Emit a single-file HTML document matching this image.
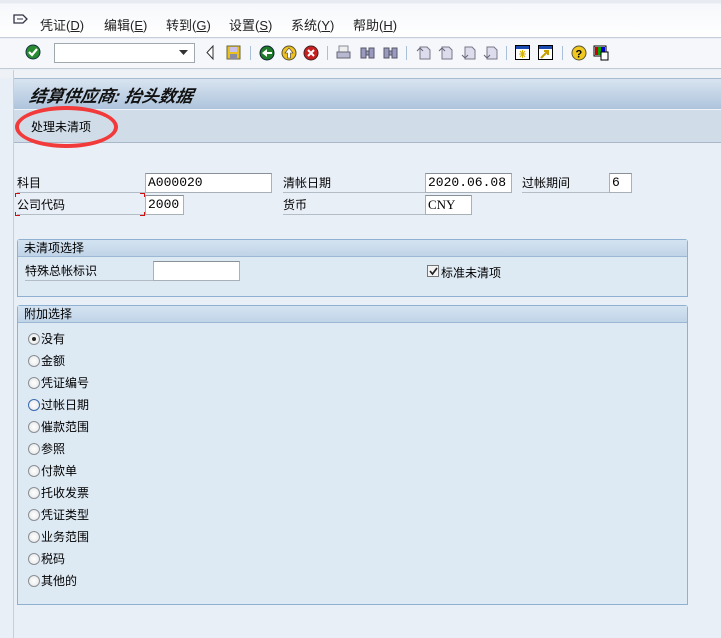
<!DOCTYPE html>
<html><head><meta charset="utf-8"><style>
*{margin:0;padding:0;box-sizing:border-box}
body{width:721px;height:638px;overflow:hidden;background:#e9eff7;font-family:"Liberation Sans","Noto Sans CJK SC",sans-serif;font-size:12px;color:#000;position:relative}
.a{position:absolute;white-space:nowrap}
.inp{position:absolute;background:#fff;border:1px solid #a8b0b8;border-top-color:#8a9098;font-family:"Liberation Mono","Noto Sans CJK SC",monospace;font-size:13px;line-height:17px;padding-left:2px}
.lbl{position:absolute;border-bottom:1px solid #b4bcc6;font-size:12px;line-height:18px}
.grp{position:absolute;left:17px;width:671px;border:1px solid #8fb0d0;border-radius:3px 3px 0 0;background:#dde9f3}
.gh{height:17px;background:linear-gradient(#d4e3f1,#c0d4e8);border-bottom:1px solid #9cb8d4;padding-left:6px;line-height:16px;font-size:12px}
.rd{position:absolute;left:10px;font-size:12px;line-height:14px}
.rd i{display:inline-block;width:12px;height:12px;border:1px solid #8a8f96;border-radius:50%;background:radial-gradient(#fff,#e4e4e4);vertical-align:-2px;margin-right:1px;position:relative}
.rd i.on::after{content:"";position:absolute;left:3px;top:3px;width:4px;height:4px;border-radius:50%;background:#222}
.sep{position:absolute;top:46px;width:1px;height:14px;background:#a8c0d8}
.ic{position:absolute;top:45px;width:15px;height:15px}
.rc{position:absolute;background:#d01010}
</style></head><body>
<div class="a" style="left:0;top:0;width:721px;height:38px;background:linear-gradient(#e8ecf2 0,#e8ecf2 3px,#f6f8fb 4px,#fff 38px);border-bottom:1px solid #c8ced6"></div>
<svg class="a" style="left:13px;top:14px" width="16" height="14"><path d="M1 1h9l4 4-4 4H1z" fill="none" stroke="#334" stroke-width="1.3"/><path d="M4 5h6" stroke="#334"/></svg>
<div class="a" style="left:40px;top:15px;font-size:13px;color:#222">凭证(<u>D</u>)</div>
<div class="a" style="left:104px;top:15px;font-size:13px;color:#222">编辑(<u>E</u>)</div>
<div class="a" style="left:166px;top:15px;font-size:13px;color:#222">转到(<u>G</u>)</div>
<div class="a" style="left:229px;top:15px;font-size:13px;color:#222">设置(<u>S</u>)</div>
<div class="a" style="left:291px;top:15px;font-size:13px;color:#222">系统(<u>Y</u>)</div>
<div class="a" style="left:353px;top:15px;font-size:13px;color:#222">帮助(<u>H</u>)</div>
<div class="a" style="left:0;top:39px;width:721px;height:30px;background:#f5f7fa;border-bottom:1px solid #c4cad2"></div>
<svg class="a" style="left:25px;top:44px" width="16" height="16"><circle cx="8" cy="8" r="7" fill="#2a8a30" stroke="#134" stroke-width="1"/><path d="M4 8l3 3 5-6" stroke="#fff" stroke-width="2.2" fill="none"/></svg>
<div class="a" style="left:54px;top:43px;width:141px;height:20px;background:#fff;border:1px solid #a0a8b0"></div>
<svg class="a" style="left:179px;top:50px" width="10" height="6"><path d="M0 0h9L4.5 5z" fill="#333"/></svg>
<svg class="a" style="left:205px;top:45px" width="10" height="15"><path d="M8 1L2 7.5 8 14z" fill="#fff" stroke="#333"/></svg>
<svg class="a" style="left:226px;top:45px" width="15" height="15"><rect x="1" y="1" width="13" height="13" fill="#e8c020" stroke="#664"/><rect x="4" y="2" width="7" height="5" fill="#c8c0e8"/><rect x="4" y="9" width="7" height="5" fill="#8a8aa0"/></svg>
<div class="sep" style="left:250px"></div>
<svg class="a" style="left:259px;top:45px" width="16" height="16"><circle cx="8" cy="8" r="7" fill="#1f7a2a" stroke="#123"/><path d="M3 8l5-4v3h5v2H8v3z" fill="#fff"/></svg>
<svg class="a" style="left:281px;top:45px" width="16" height="16"><circle cx="8" cy="8" r="7" fill="#f0c020" stroke="#553"/><path d="M8 3l4 5H9.5v5h-3V8H4z" fill="#fff" stroke="#333" stroke-width=".6"/></svg>
<svg class="a" style="left:303px;top:45px" width="16" height="16"><circle cx="8" cy="8" r="7" fill="#c82020" stroke="#422"/><path d="M5 5l6 6M11 5l-6 6" stroke="#fff" stroke-width="2"/></svg>
<div class="sep" style="left:327px"></div>
<svg class="ic" style="left:336px"><rect x="3" y="1" width="9" height="7" fill="#eee" stroke="#889"/><rect x="1" y="7" width="13" height="6" fill="#b8b8d0" stroke="#667"/></svg>
<svg class="ic" style="left:360px"><path d="M1 3h5v10H1zM9 3h5v10H9zM6 6h3v4H6z" fill="#9a9ac0" stroke="#556"/></svg>
<svg class="ic" style="left:383px"><path d="M1 3h5v10H1zM9 3h5v10H9zM6 6h3v4H6z" fill="#9a9ac0" stroke="#556"/></svg>
<div class="sep" style="left:406px"></div>
<svg class="ic" style="left:416px"><path d="M4 2h7l3 3v9H4z" fill="#dcdcec" stroke="#778"/><path d="M1 6l3-3 3 3" stroke="#667" fill="none"/></svg>
<svg class="ic" style="left:438px"><path d="M4 2h7l3 3v9H4z" fill="#dcdcec" stroke="#778"/><path d="M1 6l3-3 3 3" stroke="#667" fill="none"/></svg>
<svg class="ic" style="left:461px"><path d="M4 2h7l3 3v9H4z" fill="#dcdcec" stroke="#778"/><path d="M1 10l3 3 3-3" stroke="#667" fill="none"/></svg>
<svg class="ic" style="left:483px"><path d="M4 2h7l3 3v9H4z" fill="#dcdcec" stroke="#778"/><path d="M1 10l3 3 3-3" stroke="#667" fill="none"/></svg>
<div class="sep" style="left:506px"></div>
<svg class="ic" style="left:515px"><rect x=".5" y=".5" width="14" height="14" fill="#fff" stroke="#000"/><rect x="1" y="1" width="13" height="3" fill="#1a4ab0"/><path d="M7.5 5v8M4 9h7M5 6l5 6M10 6l-5 6" stroke="#d8b000"/></svg>
<svg class="ic" style="left:538px"><rect x=".5" y=".5" width="14" height="14" fill="#fff" stroke="#000"/><rect x="1" y="1" width="13" height="3" fill="#1a4ab0"/><path d="M3 13l7-7M6 6h4v4" stroke="#c8a000" stroke-width="2" fill="none"/></svg>
<div class="sep" style="left:562px"></div>
<svg class="ic" style="left:571px;width:16px;height:16px"><circle cx="8" cy="8" r="7" fill="#f0c820" stroke="#553"/><text x="4.5" y="12.5" font-size="11" font-weight="bold" font-family="Liberation Sans">?</text></svg>
<svg class="ic" style="left:593px;width:16px;height:16px"><rect x="1" y="1" width="12" height="10" fill="#fff" stroke="#000"/><rect x="2" y="2" width="3" height="8" fill="#c00"/><rect x="5" y="2" width="3" height="8" fill="#0a0"/><rect x="8" y="2" width="4" height="8" fill="#00c"/><rect x="8" y="7" width="7" height="8" fill="#fff" stroke="#000"/></svg>
<div class="a" style="left:0;top:70px;width:721px;height:8px;background:#eef2f7"></div>
<div class="a" style="left:13px;top:70px;width:1px;height:568px;background:#c6d0dc"></div>
<div class="a" style="left:14px;top:78px;width:707px;height:31px;background:linear-gradient(#d8e4f0,#aec4dc);border-top:1px solid #a8bcd0"></div>
<div class="a" style="left:30px;top:82px;font-size:17px;font-weight:bold;font-style:italic;color:#111;transform:skewX(-10deg)">结算供应商: 抬头数据</div>
<div class="a" style="left:14px;top:109px;width:707px;height:34px;background:#d0dde8;border-top:1px solid #eef3f8;border-bottom:1px solid #a8b8c8"></div>
<div class="a" style="left:31px;top:118px;font-size:12px">处理未清项</div>
<div class="a" style="left:15px;top:106px;width:103px;height:42px;border:4px solid #f23a3a;border-radius:50%"></div>
<div class="lbl" style="left:17px;top:174px;width:128px">科目</div>
<div class="inp" style="left:145px;top:173px;width:127px;height:20px">A000020</div>
<div class="lbl" style="left:283px;top:174px;width:142px">清帐日期</div>
<div class="inp" style="left:425px;top:173px;width:87px;height:20px">2020.06.08</div>
<div class="lbl" style="left:522px;top:174px;width:87px">过帐期间</div>
<div class="inp" style="left:609px;top:173px;width:23px;height:20px">6</div>
<div class="lbl" style="left:17px;top:196px;width:128px">公司代码</div>
<div class="rc" style="left:15px;top:193px;width:1px;height:4px"></div>
<div class="rc" style="left:15px;top:193px;width:5px;height:1px"></div>
<div class="rc" style="left:144px;top:193px;width:1px;height:4px"></div>
<div class="rc" style="left:140px;top:193px;width:5px;height:1px"></div>
<div class="rc" style="left:15px;top:212px;width:1px;height:4px"></div>
<div class="rc" style="left:15px;top:215px;width:5px;height:1px"></div>
<div class="rc" style="left:144px;top:212px;width:1px;height:4px"></div>
<div class="rc" style="left:140px;top:215px;width:5px;height:1px"></div>
<div class="inp" style="left:145px;top:195px;width:39px;height:20px">2000</div>
<div class="lbl" style="left:283px;top:196px;width:142px">货币</div>
<div class="inp" style="left:425px;top:195px;width:47px;height:20px;font-family:'Liberation Serif',serif">CNY</div>
<div class="grp" style="top:239px;height:58px"><div class="gh">未清项选择</div></div>
<div class="lbl" style="left:25px;top:262px;width:128px">特殊总帐标识</div>
<div class="inp" style="left:153px;top:261px;width:87px;height:20px"></div>
<div class="a" style="left:427px;top:265px;width:12px;height:12px;border:1px solid #777;background:#f4f4f4"></div>
<svg class="a" style="left:428px;top:266px" width="11" height="11"><path d="M2 5l2.5 3L9 2" stroke="#222" stroke-width="1.7" fill="none"/></svg>
<div class="a" style="left:441px;top:264px">标准未清项</div>
<div class="grp" style="top:305px;height:300px"><div class="gh">附加选择</div>
<div class="rd" style="top:26px"><i class="on"></i>没有</div>
<div class="rd" style="top:48px"><i></i>金额</div>
<div class="rd" style="top:70px"><i></i>凭证编号</div>
<div class="rd" style="top:92px"><i style="border-color:#3a6ab0"></i>过帐日期</div>
<div class="rd" style="top:114px"><i></i>催款范围</div>
<div class="rd" style="top:136px"><i></i>参照</div>
<div class="rd" style="top:158px"><i></i>付款单</div>
<div class="rd" style="top:180px"><i></i>托收发票</div>
<div class="rd" style="top:202px"><i></i>凭证类型</div>
<div class="rd" style="top:224px"><i></i>业务范围</div>
<div class="rd" style="top:246px"><i></i>税码</div>
<div class="rd" style="top:268px"><i></i>其他的</div>
</div>
</body></html>
